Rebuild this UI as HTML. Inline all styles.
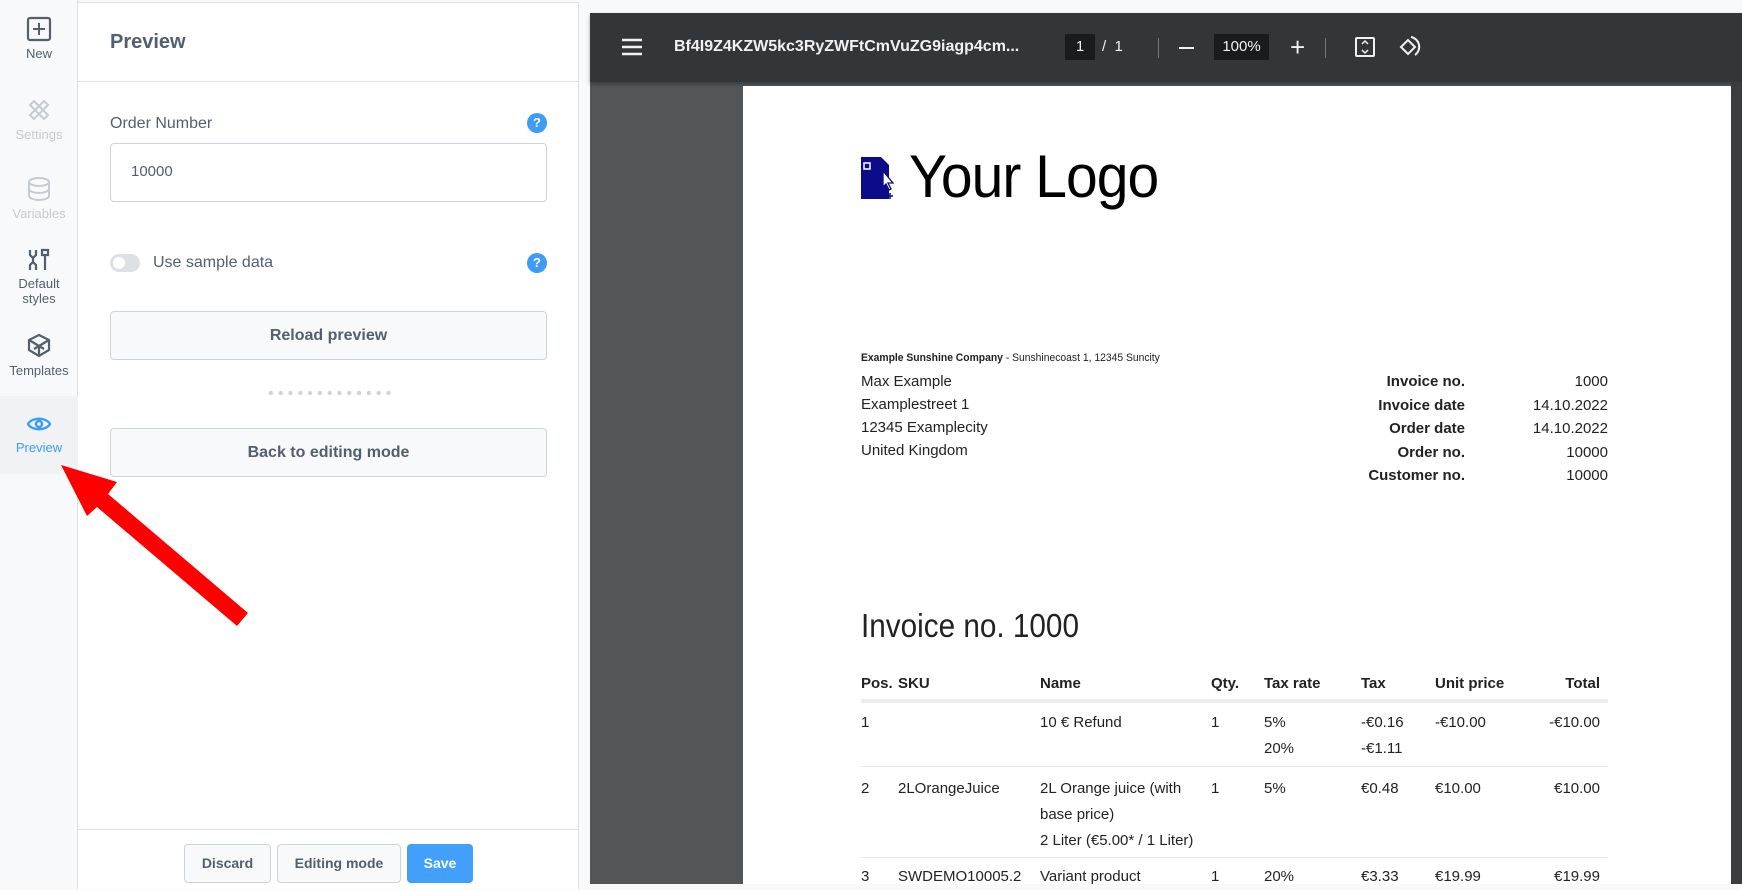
<!DOCTYPE html>
<html><head><meta charset="utf-8"><style>
*{box-sizing:border-box;margin:0;padding:0}
body{width:1742px;height:889px;overflow:hidden;background:#f8f9fa;font-family:"Liberation Sans",sans-serif;position:relative}
.abs{position:absolute}
.side{left:0;top:0;width:78px;height:889px;background:#f8f9fa;border-right:1px solid #dde1e6}
.item{position:absolute;left:0;width:78px;text-align:center;font-size:13px;color:#52606d}
.item svg{display:block;margin:0 auto}
.dis{color:#c5cbd2}
.panel{left:78px;top:2px;width:501px;height:887px;background:#fff;border-right:1px solid #dde1e6;border-top:1px solid #dde1e6}
.btn{position:absolute;background:#f8f9fb;border:1px solid #cdd3da;border-radius:4px;color:#52606d;font-weight:bold;font-size:16px;text-align:center}
.help{position:absolute;width:20px;height:20px;border-radius:50%;background:#3d9cf6;color:#fff;font-size:13px;font-weight:bold;text-align:center;line-height:20px}
.n{font-family:"Liberation Sans Narrow","Liberation Sans",sans-serif}
.pg{left:743px;top:86px;width:988px;height:798px;background:#fff}
.t{position:absolute;font-size:15px;color:#222;white-space:nowrap;line-height:26px}
.b{font-weight:bold}
.r{text-align:right}
</style></head><body>
<div class="abs side">
 <div class="item" style="top:16px"><svg width="26" height="26" viewBox="0 0 26 26"><rect x="2" y="2" width="22" height="22" rx="2" fill="none" stroke="#52606d" stroke-width="2.2"/><path d="M13 7v12M7 13h12" stroke="#52606d" stroke-width="2"/></svg><div style="margin-top:4px">New</div></div>
 <div class="item dis" style="top:97px"><svg width="26" height="26" viewBox="0 0 26 26" fill="none" stroke="#c5cbd2" stroke-width="2"><path d="M4 8l4-4 14 14-4 4z"/><path d="M18 4l4 4-14 14-4-4z"/></svg><div style="margin-top:4px">Settings</div></div>
 <div class="item dis" style="top:176px"><svg width="26" height="26" viewBox="0 0 26 26" fill="none" stroke="#c5cbd2" stroke-width="2"><ellipse cx="13" cy="6" rx="10" ry="4"/><path d="M3 6v14c0 2 4.5 4 10 4s10-2 10-4V6M3 13c0 2 4.5 4 10 4s10-2 10-4"/></svg><div style="margin-top:4px">Variables</div></div>
 <div class="item" style="top:247px"><svg width="26" height="26" viewBox="0 0 26 26" fill="none" stroke="#52606d" stroke-width="2.2"><path d="M4 3v5l3 3v4l-3 3v5M10 3v5l-3 3M7 15l3 3v5M16 3h6v5h-6zM19 8v15"/></svg><div style="margin-top:3px;line-height:15px">Default<br>styles</div></div>
 <div class="item" style="top:333px"><svg width="26" height="26" viewBox="0 0 26 26" fill="none" stroke="#52606d" stroke-width="2.2"><path d="M13 2l10 5v10l-10 6-10-6V7z"/><path d="M3 7l10 6 10-6M8 10l10 6M18 10l-10 6M13 13v10"/></svg><div style="margin-top:4px">Templates</div></div>
 <div class="item" style="top:396px;height:78px;background:#f1f2f4;color:#3d9cf6;padding-top:18px"><svg width="26" height="20" viewBox="0 0 26 20" fill="none" stroke="#3d9cf6" stroke-width="2.4"><path d="M2 10C6 3 20 3 24 10 20 17 6 17 2 10z"/><circle cx="13" cy="10" r="3"/></svg><div style="margin-top:6px">Preview</div></div>
</div>
<div class="abs panel">
 <div style="position:absolute;left:0;top:0;width:500px;height:79px;border-bottom:1px solid #dde1e6"></div>
 <div class="abs" style="left:32px;top:28px;font-size:20px;font-weight:bold;color:#52606d">Preview</div>
 <div class="abs" style="left:32px;top:112px;font-size:16px;color:#52606d">Order Number</div>
 <div class="help" style="left:449px;top:110px">?</div>
 <div class="abs" style="left:32px;top:140px;width:437px;height:59px;border:1px solid #cdd3da;border-radius:4px;padding:19px 20px;font-size:15px;color:#52606d">10000</div>
 <div class="abs" style="left:32px;top:251px;width:30px;height:18px;border-radius:9px;background:#dde1e6"><div style="margin:3px;width:12px;height:12px;border-radius:50%;background:#fff"></div></div>
 <div class="abs" style="left:75px;top:251px;font-size:16px;color:#52606d">Use sample data</div>
 <div class="help" style="left:449px;top:250px">?</div>
 <div class="btn" style="left:32px;top:308px;width:437px;height:49px;line-height:47px">Reload preview</div>
 <div class="abs" style="left:188px;top:388px;width:126px;height:4px;background:radial-gradient(circle,#cdd3da 2px,transparent 2.3px) 0 0/9.8px 4px"></div>
 <div class="btn" style="left:32px;top:425px;width:437px;height:49px;line-height:47px">Back to editing mode</div>
 <div style="position:absolute;left:0;top:826px;width:500px;border-top:1px solid #dde1e6"></div>
 <div class="btn" style="left:106px;top:841px;width:87px;height:39px;line-height:37px;font-size:14px">Discard</div>
 <div class="btn" style="left:199px;top:841px;width:124px;height:39px;line-height:37px;font-size:14px">Editing mode</div>
 <div class="btn" style="left:329px;top:841px;width:66px;height:39px;line-height:37px;font-size:14px;background:#42a0fa;border-color:#42a0fa;color:#fff">Save</div>
</div>
<div class="abs" style="left:590px;top:13px;width:1152px;height:871px;background:#525659"></div>
<div class="abs" style="left:590px;top:13px;width:1152px;height:69px;background:#323639;box-shadow:0 2px 4px rgba(0,0,0,.3)">
 <svg class="abs" style="left:32px;top:25px" width="22" height="18"><path d="M0 2h20M0 9h20M0 16h20" stroke="#f1f1f1" stroke-width="2.4"/></svg>
 <div class="abs" style="left:84px;top:25px;color:#f1f1f1;font-weight:bold;font-size:16px">Bf4I9Z4KZW5kc3RyZWFtCmVuZG9iagp4cm...</div>
 <div class="abs" style="left:475px;top:21px;width:30px;height:26px;background:#191b1c;color:#f1f1f1;font-size:15px;text-align:center;line-height:26px">1</div>
 <div class="abs" style="left:512px;top:25px;color:#f1f1f1;font-size:15px">/&nbsp;&nbsp;1</div>
 <div class="abs" style="left:568px;top:25px;width:1px;height:20px;background:#777"></div>
 <div class="abs" style="left:589px;top:34px;width:15px;height:2px;background:#f1f1f1"></div>
 <div class="abs" style="left:624px;top:21px;width:55px;height:26px;background:#191b1c;color:#f1f1f1;font-size:15px;text-align:center;line-height:26px">100%</div>
 <div class="abs" style="left:700px;top:19px;color:#f1f1f1;font-size:26px;line-height:30px">+</div>
 <div class="abs" style="left:735px;top:25px;width:1px;height:20px;background:#777"></div>
 <svg class="abs" style="left:764px;top:23px" width="22" height="22" fill="none" stroke="#f1f1f1" stroke-width="2"><rect x="2" y="2" width="18" height="18" rx="1"/><path d="M8 8l3-3 3 3M8 14l3 3 3-3" stroke-width="1.5"/></svg>
 <svg class="abs" style="left:808px;top:21px" width="24" height="26" fill="none" stroke="#f1f1f1" stroke-width="2"><path d="M3 13l7-7 7 7-7 7z"/><path d="M13 3a10 10 0 0 1 4 18"/></svg>
</div>
<div class="abs pg">
 <svg class="abs" style="left:118px;top:71px" width="36" height="42"><path d="M0 0h20l8 8v34H0z" fill="#0c0c8a"/><rect x="3" y="6" width="6" height="6" fill="none" stroke="#fff" stroke-width="1.5"/><path d="M22 14l10 12-5 0 3 6-2 1-3-6-3 3z" fill="#fff" stroke="#0c0c8a" stroke-width="1.3"/><path d="M29 36v6M26 39h6" stroke="#0c0c8a" stroke-width="1.5"/></svg>
 <div class="t" style="left:166px;top:56px;font-size:60px;line-height:70px;color:#000;font-weight:300;letter-spacing:-1px;transform:scaleX(.95);transform-origin:left">Your Logo</div>
 <div class="t n" style="left:118px;top:259px;font-size:11px;transform:scaleX(.94);transform-origin:left"><b>Example Sunshine Company</b> - Sunshinecoast 1, 12345 Suncity</div>
 <div class="t n" style="left:118px;top:284px;line-height:23px">Max Example<br>Examplestreet 1<br>12345 Examplecity<br>United Kingdom</div>
 <div class="t n b r" style="left:522px;width:200px;top:284px;line-height:23.5px">Invoice no.<br>Invoice date<br>Order date<br>Order no.<br>Customer no.</div>
 <div class="t n r" style="left:765px;width:100px;top:284px;line-height:23.5px">1000<br>14.10.2022<br>14.10.2022<br>10000<br>10000</div>
 <div class="t n" style="left:118px;top:518px;font-size:33px;line-height:44px;transform:scaleX(.9);transform-origin:left">Invoice no. 1000</div>
 <div class="t n b" style="left:118px;top:585px">Pos.</div><div class="t n b" style="left:155px;top:585px">SKU</div><div class="t n b" style="left:297px;top:585px">Name</div><div class="t n b" style="left:468px;top:585px">Qty.</div><div class="t n b" style="left:521px;top:585px">Tax rate</div><div class="t n b" style="left:618px;top:585px">Tax</div><div class="t n b" style="left:692px;top:585px">Unit price</div><div class="t n b r" style="left:757px;width:100px;top:585px">Total</div>
 <div class="abs" style="left:118px;top:613px;width:747px;height:4px;background:#ececec"></div>
 <div class="t n" style="left:118px;top:624px">1</div><div class="t n" style="left:297px;top:624px">10 € Refund</div><div class="t n" style="left:468px;top:624px">1</div><div class="t n" style="left:521px;top:624px">5%<br>20%</div><div class="t n" style="left:618px;top:624px">-€0.16<br>-€1.11</div><div class="t n" style="left:692px;top:624px">-€10.00</div><div class="t n r" style="left:757px;width:100px;top:624px">-€10.00</div>
 <div class="abs" style="left:118px;top:680px;width:747px;height:1px;background:#e8e8e8"></div>
 <div class="t n" style="left:118px;top:690px">2</div><div class="t n" style="left:155px;top:690px">2LOrangeJuice</div><div class="t n" style="left:297px;top:690px">2L Orange juice (with<br>base price)<br>2 Liter (€5.00* / 1 Liter)</div><div class="t n" style="left:468px;top:690px">1</div><div class="t n" style="left:521px;top:690px">5%</div><div class="t n" style="left:618px;top:690px">€0.48</div><div class="t n" style="left:692px;top:690px">€10.00</div><div class="t n r" style="left:757px;width:100px;top:690px">€10.00</div>
 <div class="abs" style="left:118px;top:771px;width:747px;height:1px;background:#e8e8e8"></div>
 <div class="t n" style="left:118px;top:778px">3</div><div class="t n" style="left:155px;top:778px">SWDEMO10005.2</div><div class="t n" style="left:297px;top:778px">Variant product</div><div class="t n" style="left:468px;top:778px">1</div><div class="t n" style="left:521px;top:778px">20%</div><div class="t n" style="left:618px;top:778px">€3.33</div><div class="t n" style="left:692px;top:778px">€19.99</div><div class="t n r" style="left:757px;width:100px;top:778px">€19.99</div>
</div>
<div class="abs" style="left:1731px;top:82px;width:11px;height:802px;background:#3a3d40"></div>
<svg class="abs" style="left:0;top:0" width="300" height="700"><polygon points="61,465 117,482 108,494 248,613 237,626 97,507 87,516" fill="#ff0000"/></svg>
</body></html>
